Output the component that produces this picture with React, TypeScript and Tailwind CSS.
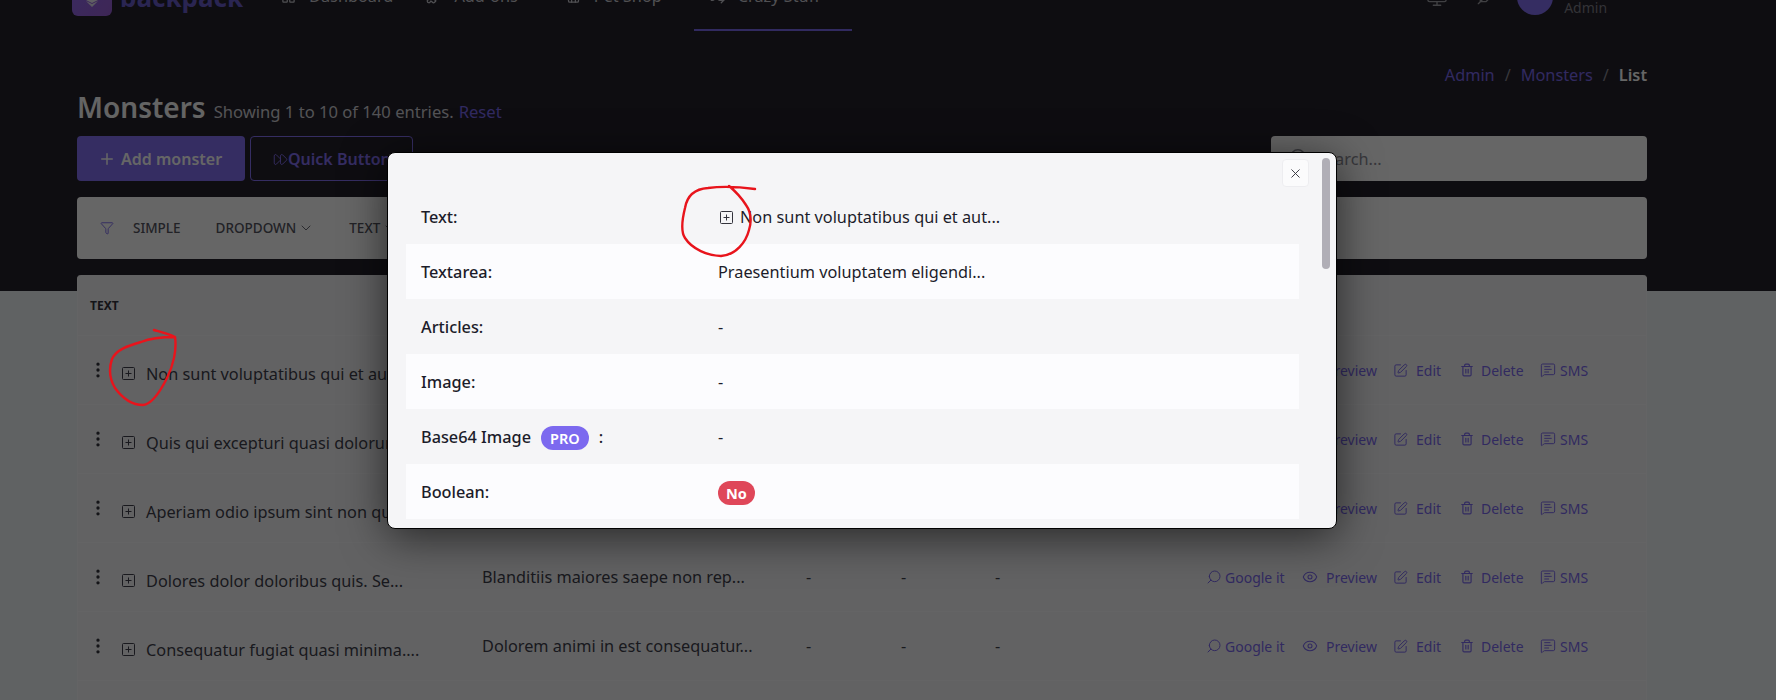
import { useState } from "react";
import {
  Search,
  Eye,
  SquarePen,
  Trash2,
  MessageSquareText,
  EllipsisVertical,
  Plus,
  FastForward,
  Filter,
  ChevronDown,
  X,
  LayoutDashboard,
  Puzzle,
  Store,
  Shuffle,
  Monitor,
  Feather,
} from "lucide-react";

const rows = [
  { text: "Non sunt voluptatibus qui et aut...", area: "Praesentium voluptatem eligendi..." },
  { text: "Quis qui excepturi quasi dolorum...", area: "Tempora sed voluptas rerum qui..." },
  { text: "Aperiam odio ipsum sint non qui...", area: "Eum ut quisquam dolores velit..." },
  { text: "Dolores dolor doloribus quis. Se...", area: "Blanditiis maiores saepe non rep..." },
  { text: "Consequatur fugiat quasi minima....", area: "Dolorem animi in est consequatur..." },
  { text: "Ut enim voluptas dolorem sit aut...", area: "Nihil quia error sapiente dolor..." },
];

const navItems = [
  { label: "Dashboard", icon: LayoutDashboard, pad: "pr-[17px]" },
  { label: "Add-ons", icon: Puzzle, pad: "pr-[32px]" },
  { label: "Pet Shop", icon: Store, pad: "pr-[32px]" },
  { label: "Crazy Stuff", icon: Shuffle, pad: "pr-[32px]", active: true },
];

function PlusBox() {
  return (
    <svg width="13" height="13" viewBox="0 0 13 13" fill="none" stroke="currentColor" strokeWidth="1" className="shrink-0">
      <rect x="0.5" y="0.5" width="12" height="12" rx="1" />
      <path d="M6.5 3.5v6M3.5 6.5h6" />
    </svg>
  );
}

function Actions() {
  return (
    <div className="flex items-center text-[14px] text-[#7c69ef]">
      <a className="flex w-[94px] items-center gap-[3px]">
        <Search size={16} className="-ml-[2px] -scale-x-100" strokeWidth={1.5} />
        Google it
      </a>
      <a className="flex w-[91px] items-center gap-[8px]">
        <Eye size={16} strokeWidth={1.6} />
        Preview
      </a>
      <a className="flex w-[67px] items-center gap-[8px]">
        <SquarePen size={15} strokeWidth={1.6} />
        Edit
      </a>
      <a className="flex w-[80px] items-center gap-[7px]">
        <Trash2 size={14} strokeWidth={2} />
        Delete
      </a>
      <a className="flex items-center gap-[4px]">
        <MessageSquareText size={16} strokeWidth={1.5} />
        SMS
      </a>
    </div>
  );
}

function Row({ text, area }: { text: string; area: string }) {
  return (
    <div className="grid h-[69px] grid-cols-[392px_324px_95px_94px_213px_1fr] items-center border-b border-[#fbfbfc] text-[16.3px] text-[#3f3f4c]">
      <div className="flex items-center whitespace-nowrap">
        <EllipsisVertical size={20} className="ml-[10px] text-[#33333c]" strokeWidth={2} />
        <span className="ml-[14px] mt-[6px] text-[#3f3f4c]">
          <PlusBox />
        </span>
        <span className="ml-[11px] mt-[8px]">{text}</span>
      </div>
      <div className="px-3 pt-[1px] whitespace-nowrap">{area}</div>
      <div className="px-3">-</div>
      <div className="px-3">-</div>
      <div className="px-3">-</div>
      <div className="px-3">
        <Actions />
      </div>
    </div>
  );
}

function ModalRow({
  label,
  children,
  white,
}: {
  label: React.ReactNode;
  children: React.ReactNode;
  white?: boolean;
}) {
  return (
    <div
      className={`grid h-[55px] grid-cols-[297px_1fr] items-center pl-[15px] pt-[2px] text-[16.3px] text-[#1c1c2a] ${
        white ? "bg-[#fcfcfe]" : ""
      }`}
    >
      <div className="flex items-center font-medium">{label}</div>
      <div className="flex items-center">{children}</div>
    </div>
  );
}

export default function App() {
  const [open] = useState(true);

  return (
    <div className="relative h-[700px] overflow-hidden bg-[#f1f4f8] font-['Noto_Sans',sans-serif]">
      <div className="bg-[#24212b] pb-[32px]">
        <header className="-mt-[37px] flex h-[68px] items-center pl-[72px] pr-[168px] text-[16.3px] text-[#c8c8d0]">
          <div className="flex h-[53px] w-[40px] items-start justify-center self-start rounded-[6px] bg-gradient-to-br from-[#8f6cf5] to-[#9a5fd6]">
            <svg width="16" height="18" viewBox="0 0 16 18" className="mt-[26px]">
              <path d="M0 4l8-4 8 4-8 4z" fill="#fff" />
              <path d="M0 7l8 4 8-4v3l-8 4-8-4z" fill="#f0eef8" />
              <path d="M2 12l6 3 6-3-6 6z" fill="#e4e0f0" />
            </svg>
          </div>
          <span className="ml-[8px] text-[26px] font-bold text-[#6a5dcc]">backpack</span>
          <nav className="ml-[22px] flex h-full">
            {navItems.map((item) => (
              <a
                key={item.label}
                className={`flex items-center gap-[13px] border-b-2 pl-[16px] ${item.pad} ${
                  item.active ? "border-[#7c69ef]" : "border-transparent"
                }`}
              >
                <item.icon size={15} />
                {item.label}
              </a>
            ))}
          </nav>
          <div className="ml-auto flex items-center -mr-[16px]">
            <Monitor size={22} strokeWidth={1.5} className="text-[#a0a0a8]" />
            <Feather size={16} className="ml-[29px] text-[#a0a0a8]" />
            <div className="ml-[24px] h-[36px] w-[36px] rounded-full bg-[#8470f5]" />
            <div className="ml-[11px] text-[14px] leading-[22px] text-[#80808a]">
              <div>John Doe</div>
              <div>Admin</div>
            </div>
          </div>
        </header>

        <div className="pl-[77px] pr-[129px]">
          <div className="mt-[32px] flex h-[24px] justify-end gap-[10px] text-[16.3px] leading-[24px]">
            <a className="text-[#7c69ef]">Admin</a>
            <span className="text-[#8a8a95]">/</span>
            <a className="text-[#7c69ef]">Monsters</a>
            <span className="text-[#8a8a95]">/</span>
            <span className="font-semibold text-white">List</span>
          </div>

          <div className="mt-[1px] flex h-[39px] items-baseline">
            <h2 className="text-[28px] font-semibold leading-[38px] text-[#fafafa]">Monsters</h2>
            <span className="ml-[8px] text-[16.6px] text-[#d0d0d6]">Showing 1 to 10 of 140 entries.</span>
            <a className="ml-[5px] text-[16.6px] text-[#7c69ef]">Reset</a>
          </div>

          <div className="mt-[9px] flex h-[45px] items-stretch">
            <button className="flex w-[168px] items-center gap-[5px] rounded-[4px] bg-[#8470f5] pl-[21px] pt-[1px] text-[16px] font-semibold text-white">
              <Plus size={18} />
              Add monster
            </button>
            <button className="ml-[5px] flex w-[163px] items-center rounded-[4px] border border-[#8470f5] pl-[22px] pt-[1px] text-[16px] font-semibold text-[#8470f5]">
              <FastForward size={15} strokeWidth={1.5} />
              Quick Button
            </button>
            <div className="ml-auto flex w-[376px] items-center gap-[9px] rounded-[4px] bg-white pl-[15px] pt-[1px] text-[16.3px] text-[#8b8b95]">
              <Search size={22} className="mb-[3px] -scale-x-100" strokeWidth={1.6} />
              Search...
            </div>
          </div>

          <div className="mt-[16px] flex h-[62px] items-center rounded-[4px] bg-white pl-[23px] text-[13.5px] font-medium uppercase text-[#55555f]">
            <Filter size={14} className="text-[#7c69ef]" strokeWidth={1.6} />
            <span className="ml-[19px]">Simple</span>
            <span className="ml-[35px]">Dropdown</span>
            <ChevronDown size={16} strokeWidth={1.3} className="ml-[2px]" />
            <span className="ml-[35px]">Text</span>
            <ChevronDown size={16} strokeWidth={1.3} className="ml-[2px]" />
          </div>
        </div>
      </div>

      <main className="relative -mt-[16px] pl-[77px] pr-[129px]">
        <div className="rounded-t-[4px] border-x border-[#fbfbfc] bg-[#f5f6f8]">
          <div className="flex h-[61px] items-center border-b border-[#fbfbfc] pl-[12px] pt-[2px] text-[12px] font-bold uppercase text-[#33333c]">
            Text
          </div>
          {rows.map((row) => (
            <Row key={row.text} text={row.text} area={row.area} />
          ))}
        </div>
      </main>

      {open && <div className="absolute inset-0 bg-black/60" />}

      {open && (
        <div className="absolute left-[387px] top-[152px] h-[377px] w-[950px] overflow-hidden rounded-[8px] border border-black bg-[#f5f5f7] pl-[18px] pr-[37px] pt-[36px] shadow-[0_8px_44px_rgba(0,0,0,0.6)]">
          <button className="absolute left-[894px] top-[6px] flex h-[28px] w-[27px] items-center justify-center rounded-[4px] border border-[#ededf0] bg-[#fbfbfc] text-[#33333c]">
            <X size={15} strokeWidth={1.5} />
          </button>
          <div className="absolute left-[934px] top-[5px] h-[111px] w-[8px] rounded-full bg-[#b0aeb6]" />

          <ModalRow label="Text:">
            <span className="ml-[2px] text-[#33333c]">
              <PlusBox />
            </span>
            <span className="ml-[7px]">Non sunt voluptatibus qui et aut...</span>
          </ModalRow>
          <ModalRow label="Textarea:" white>
            Praesentium voluptatem eligendi...
          </ModalRow>
          <ModalRow label="Articles:">-</ModalRow>
          <ModalRow label="Image:" white>
            -
          </ModalRow>
          <ModalRow
            label={
              <>
                Base64 Image
                <span className="ml-[10px] rounded-full bg-[#7c69ef] px-[9px] text-[14.5px] font-semibold leading-[24px] text-white">
                  PRO
                </span>
                <span className="ml-[10px]">:</span>
              </>
            }
          >
            -
          </ModalRow>
          <ModalRow label="Boolean:" white>
            <span className="rounded-full bg-[#df4759] px-[8px] text-[14.5px] font-bold leading-[24px] text-white">No</span>
          </ModalRow>
        </div>
      )}

      {/* red marker circles sit on top of everything */}
      <svg
        className="pointer-events-none absolute left-[678px] top-[184px]"
        width="80"
        height="76"
        viewBox="0 0 80 76"
        fill="none"
        stroke="#e8141c"
        strokeWidth="2.4"
        strokeLinecap="round"
      >
        <path d="M77 5 C62 3 45 2 30 4 C16 5 9 12 7 24 C4 36 3 48 7 54 C14 65 30 72 43 72 C58 71 68 58 71 46 C74 36 73 28 68 21 C63 13 57 7 51 2" />
      </svg>
      <svg
        className="pointer-events-none absolute left-[107px] top-[328px]"
        width="72"
        height="80"
        viewBox="0 0 72 80"
        fill="none"
        stroke="#e8141c"
        strokeWidth="2.4"
        strokeLinecap="round"
      >
        <path d="M47 2 C54 4 62 6 68 9 C58 9 44 10 34 14 C20 18 9 22 5 31 C2 40 2 50 8 60 C16 71 26 77 36 77 C46 76 54 62 60 50 C66 38 70 22 68 9" />
      </svg>
    </div>
  );
}
